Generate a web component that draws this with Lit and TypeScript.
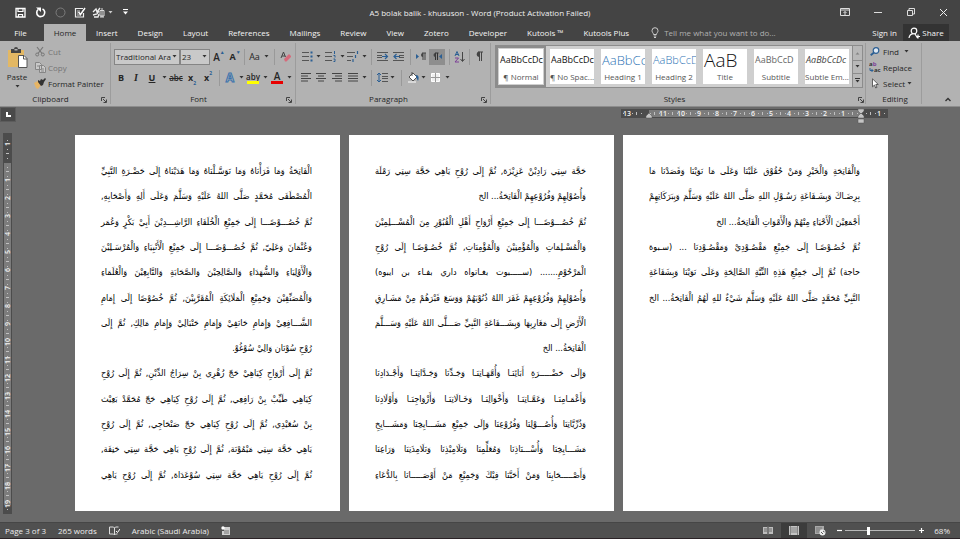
import { LitElement, html, svg, css } from "lit";
import { customElement, property } from "lit/decorators.js";
import { classMap } from "lit/directives/class-map.js";

const shared = css`
  * { box-sizing: border-box; }
  button, select, input {
    font: inherit; color: inherit; background: none; border: 0; margin: 0; padding: 0;
    border-radius: 0; outline: 0; white-space: nowrap;
  }
  button { display: inline-flex; align-items: center; justify-content: center; }
  svg { display: block; flex: none; }
`;

const icon = (w: number, h: number, body: unknown) =>
  html`<svg width=${w} height=${h} viewBox="0 0 ${w} ${h}" fill="none" aria-hidden="true">${body}</svg>`;
const p = (d: string, stroke = "#444", width = 1) => svg`<path d=${d} stroke=${stroke} stroke-width=${width} />`;
const f = (d: string, fill = "#444") => svg`<path d=${d} fill=${fill} />`;
const caret = icon(5, 3, f("M0.5 0h4L2.5 2.5z", "#333"));

const BLUE = "#2b5f94";

const icons = {
  save: icon(11, 11, svg`${p("M1 1.5h9v8.500h-9z", "#fff", 1.3)}${p("M3 1.500v3h5v-3M3.500 10V7.500h4V10", "#fff", 1.200)}`),
  undo: icon(11, 11, svg`${p("M3.200 2.500A4 4 0 1 0 7.500 2", "#fff", 1.600)}${f("M1 .5h5v4.500z", "#fff")}`),
  circle: icon(11, 11, svg`<circle cx="5.500" cy="5.500" r="4.500" stroke="#7c7c7c" />`),
  form: icon(12, 11, svg`${p("M9 1.500H1.500v8.500h8V6", "#eee", 1.200)}${p("M3 4h3M3 6h1M3 8h4", "#ccc")}${p("M4.500 5l2 2.500L11 1", "#fff", 1.500)}`),
  translate: icon(13, 11, svg`${p("M1 5l3-3 1 3 3-4M1 8l4-1 2-3M2 10h4l1-3", "#eee", 1.300)}${p("M8 3.500h4v5.500H8zM10 1v9M8 10h4", "#ddd")}`),
  customize: icon(7, 6, svg`${p("M1 .5h5", "#fff")}${f("M1 2.500h5L3.500 5.500z", "#fff")}`),
  display: icon(10, 8, svg`${p("M.5.5h9v7h-9zM.5 2h9", "#ddd")}${p("M5 7V3.500M3.500 5L5 3.500 6.500 5", "#ddd")}`),
  minimize: icon(8, 8, p("M0 4.500h8", "#ddd")),
  restore: icon(8, 8, p("M.5 2.500h5v5h-5zM2 2V.5h5.500V6H6", "#ddd")),
  close: icon(9, 9, p("M1 1l7 7M8 1L1 8", "#eee")),
  bulb: icon(8, 11, svg`${p("M2.500 7.500C2.500 6 1 5.500 1 3.700a3 3 0 0 1 6 0C7 5.500 5.500 6 5.500 7.500zM2.700 9h2.600M3 10.500h2", "#ccc")}`),
  person: icon(12, 12, svg`<circle cx="6" cy="4" r="2.800" stroke="#fff" stroke-width="1.200" />${p("M1 11c.5-3 2-4 4-4.300M7 7l2.500 4M8 9.500h4M10 7.500v4", "#fff", 1.200)}`),
  paste: icon(21, 22, svg`${f("M1 3h16v17H1z", "#e3b864")}${f("M4 2h3a2 2 0 0 1 4 0h3v4H4z", "#444")}${f("M7.500 2h3v1.500h-3z", "#b2b2b2")}<path d="M11.500 8.500h5.500l3 3v9h-8.500z" fill="#fff" stroke="#555" />${p("M16.500 8.500v3.500H20", "#555")}`),
  cut: icon(10, 11, svg`${p("M2 1l5 6.500M8 1L3 7.500", "#777", 1.200)}<circle cx="2.200" cy="8.500" r="1.500" stroke="#777" /><circle cx="7.800" cy="8.500" r="1.500" stroke="#777" />`),
  copy: icon(11, 11, svg`<path d="M.5.500h4l2 2v5h-6zM4.500 3.500h4l2 2v5h-6z" fill="#c9c9c9" stroke="#858585" />${p("M6 7h3M6 9h3M2 4h2", "#858585")}`),
  painter: icon(12, 12, svg`${f("M0 6l4-2 3 4-3 4-2-1z", "#e6b566")}${f("M4 3l2 1 1-2 2 1 2-2 1 1-2 3-1 3-2 1-3-4z", "#333")}`),
  erase: icon(11, 11, svg`${p("M1 7L3.500 1l2 5M2 5h3", "#444")}${f("M4 8l5-5 2.500 2.500-5 5H5z", "#d66a7b")}`),
  bullets: icon(11, 11, svg`${p("M0 1.500h7M0 5.500h7M0 9.500h7", "#555")}${f("M8.500.500h2v2h-2zM8.500 4.500h2v2h-2zM8.500 8.500h2v2h-2z", BLUE)}`),
  numbering: icon(11, 11, svg`${p("M0 1.500h7M0 5.500h7M0 9.500h7", "#555")}${p("M9.500 0v3M8.500 4.500h1.500v2M8.500 8h1.500v2.500h-1.500", BLUE)}`),
  multilevel: icon(12, 11, svg`${p("M0 1.500h8M0 5.500h6M0 9.500h4", "#555")}${p("M10.500 0v3M8.500 4v3M6 8v3", BLUE, 1.200)}`),
  indentOut: icon(12, 9, svg`${p("M0 .5h11M0 3.500h5M0 5.500h5M0 8.500h11", "#555")}${p("M5 4.500h5M8 2l2.500 2.500L8 7", BLUE, 1.200)}`),
  indentIn: icon(12, 9, svg`${p("M0 .5h11M6 3.500h5M6 5.500h5M0 8.500h11", "#555")}${p("M1 4.500h6M3.500 2L1 4.500 3.500 7", BLUE, 1.200)}`),
  ltr: icon(10, 9, svg`${p("M7 1v7M9 1v7M6 1h4", "#444")}${f("M7 1a2 2 0 0 0 0 4z")}${f("M0 2v5l3-2.500z", BLUE)}`),
  rtl: icon(10, 9, svg`${p("M3.500 1v7M5.500 1v7M3 1h3.500", "#333")}${f("M3.500 1a2 2 0 0 0 0 4z")}${f("M10 2v5L7 4.500z", BLUE)}`),
  sort: icon(11, 12, svg`${p("M1 5L3 .5 5 5M1.500 3.500h3", BLUE)}${p("M1 7h3.500L1 11h4", "#7d3f98")}${p("M8.500 1v9M6.500 8l2 2.500 2-2.500", "#444")}`),
  pilcrow: icon(8, 11, svg`${p("M4.500 1v9M6.500 1v9M3 1h5", "#444")}${f("M4.500.500a2.500 2.500 0 0 0 0 5.500z")}`),
  alignLeft: icon(10, 9, p("M0 .5h10M0 3h7M0 5.500h10M0 8h7", "#444")),
  alignCenter: icon(10, 9, p("M0 .5h10M2 3h6M0 5.500h10M2 8h6", "#444")),
  alignRight: icon(10, 9, p("M0 .5h10M3 3h7M0 5.500h10M3 8h7", "#444")),
  justify: icon(10, 9, p("M0 .5h10M0 3h10M0 5.500h10M0 8h10", "#444")),
  spacing: icon(11, 11, svg`${p("M5 1.500h6M5 4.500h6M5 6.500h6M5 9.500h6", "#555")}${p("M2 1v9M0 3l2-2 2 2M0 8l2 2 2-2", BLUE)}`),
  shading: icon(11, 11, svg`<path d="M1 5l4-4 4 4-4 4z" fill="#fff" stroke="#555" />${p("M4 0v4", "#555")}${f("M8 3c3 0 3 3 2 6L8 5z", BLUE)}${f("M0 9h8v2H0z", "#d8d8d8")}`),
  borders: icon(9, 9, svg`<path d="M.5.500h8v8h-8z" fill="#eee" stroke="#fff" />${p("M4.500 0v9M0 4.500h9", "#999")}`),
  find: icon(10, 9, svg`<circle cx="6" cy="3.500" r="2.800" fill="#dfe9f3" stroke="#2b5f94" stroke-width="1.200" />${p("M4 5.500L.7 8.300", BLUE, 1.800)}`),
  replace: icon(12, 12, svg`<text x="0" y="5" class="tiny">a<tspan class="violet">b</tspan></text><text x="5" y="11" class="tiny">ac</text>${p("M1 7v2.500h3M2.500 8L4 9.500 2.500 11", BLUE)}`),
  pointer: icon(8, 11, svg`<path d="M1.500.800v8l2-1.800 1.200 3 1.300-.6L4.800 6.500h2.500z" fill="#fff" stroke="#444" stroke-width=".8" />`),
  launcher: icon(6, 6, svg`${p("M.5 4V.5H4", "#444")}${p("M2 2l3 3M5.500 2.500v3h-3", "#444")}`),
  book: icon(11, 10, svg`${p("M.5 1h4l1 1v7l-1-1h-4zM5.500 2l1-1h3M5.500 9l1-1h2", "#ddd")}${p("M7 5l1.500 1.500L11 3", "#fff")}`),
  macro: icon(9, 9, svg`${f("M3 1h6v8H1V5h2z", "#cfcfcf")}<circle cx="2" cy="2" r="1.700" fill="#fff" />${p("M3 5h5M3 7h5", "#777")}`),
  read: icon(10, 9, svg`${f("M0 1h4.500v7H0zM5.500 1H10v7H5.500z", "#bdbdbd")}${p("M5 0v9M1 3h3M1 5h3M6 3h3M6 5h3", "#6b6b6b")}`),
  print: icon(10, 9, svg`${f("M0 0h10v9H0z", "#c4c4c4")}${p("M2 2h6M2 4h6M2 6h6M1.500 0v9M8.500 0v9", "#858585")}`),
  web: icon(11, 10, svg`${f("M0 0h9v8H0z", "#a8a8a8")}${p("M1 2h6M1 4h4M1 6h4", "#777")}<circle cx="7.500" cy="6.500" r="3" fill="#eee" />${p("M6 6l2 2M8 5l1.500 1", "#555")}`),
};

const TABS = ["Insert", "Design", "Layout", "References", "Mailings", "Review", "View", "Zotero", "Developer", "Kutools ™", "Kutools Plus"];

interface Line { text: string; end?: boolean }
const L = (text: string): Line => ({ text });
const E = (text: string): Line => ({ text, end: true });

const PAGES: Line[][] = [
  [
    L("الْفَاتِحَةُ وَمَا قَرَأْنَاهُ وَمَا تَوَسَّـلْنَاهُ وَمَا هَدَيْنَاهُ إِلَى حَضْـرَةِ النَّبِيِّ"),
    L("الْمُصْطَفَى مُحَمَّدٍ صَلَّى اللهُ عَلَيْهِ وَسَلَّمَ وَعَلَى أَلِهِ وَأَصْحَابِهِ,"),
    L("ثُمَّ خُصُـــوْصًـــا إِلَى جَمِيْعِ الْخُلَفَاءِ الرَّاشِـــدِيْنَ أَبِيْ بَكْرٍ وَعُمَر"),
    L("وَعُثْمَانَ وَعَلِيّ, ثُمَّ خُصُـــوْصًـــا إِلَى جَمِيْعِ الْأَنْبِيَاءِ وَالْمُرْسَـلِيْنَ"),
    L("وَالْأَوْلِيَاءِ وَالشُّهَدَاءِ وَالصَّالِحِيْنَ وَالصَّحَابَةِ وَالتَّابِعِيْنَ وَالْعُلَمَاءِ"),
    L("وَالْمُصَنِّفِيْنَ وَجَمِيْعِ الْمَلَائِكَةِ الْمُقَرَّبِيْنَ, ثُمَّ خُصُوْصًا إِلَى إِمَامِ"),
    L("الشَّـــافِعِيْ وَإِمَامِ حَانَفِيْ وَإِمَامِ حَنْبَالِيْ وَإِمَامِ مَالِكِ, ثُمَّ إِلَى"),
    E("رُوْحِ سُوْنَان وَالِيْ سُوْغُوْ."),
    L("ثُمَّ إِلَى أَرْوَاحِ كِيَاهِيْ حَجّ زُهْرِي بِنْ سِرَاجُ الدِّيْنِ, ثُمَّ إِلَى رُوْحِ"),
    L("كِيَاهِي طَيِّبْ بِنْ رَافِعِي, ثُمَّ إِلَى رُوْحِ كِيَاهِي حَجّ مُحَمَّدْ بَعِيْث"),
    L("بِنْ سُعَيْدِي, ثُمَّ إِلَى رُوْحِ كِيَاهِي حَجّ صَنْحَاجِي, ثُمَّ إِلَى رُوْحِ"),
    L("يَاهِي حَجَّة سِتِي مَيْمُوْنَة, ثُمَّ إِلَى رُوْحِ يَاهِي حَجَّة سِتِي حَنِفَة,"),
    L("ثُمَّ إِلَى رُوْحِ يَاهِي حَجَّة سِتِي سُوْعَدَاة, ثُمَّ إِلَى رُوْحِ يَاهِي"),
  ],
  [
    L("حَجَّة سِتِي رَادِيْنْ عَزِيْزَة, ثُمَّ إِلَى رُوْحِ يَاهِي حَجَّة سِتِي رَمْلَة"),
    E("وَأُصُوْلِهِمْ وَفُرُوْعِهِمْ الْفَاتِحَةُ... الخ"),
    L("ثُمَّ خُصُـــوْصًـــا إِلَى جَمِيْعِ أَرْوَاحِ أَهْلِ الْقُبُوْرِ مِنَ الْمُسْـــلِمِيْنَ"),
    L("وَالْمُسْـلِمَاتِ وَالْمُؤْمِنِيْنَ وَالْمُؤْمِنَاتِ, ثُمَّ خُصُـوْصًـا إِلَى رُوْحِ"),
    L("الْمَرْحُوْمِ....... (ســـــبوت بغـاتواه داري بفـاء بن ايبوه)"),
    L("وَأُصُوْلِهِمْ وَفُرُوْعِهِمْ غَفَرَ اللهُ ذُنُوْبَهُمْ وَوَسَعَ قَبْرَهُمْ مِنْ مَشَـارِقِ"),
    L("الْأَرْضِ إِلَى مَغَارِبِهَا وَبِشَـــفَاعَةِ النَّبِيِّ صَـــلَّى اللهُ عَلَيْهِ وَسَـــلَّمَ"),
    E("الْفَاتِحَةُ... الخ"),
    L("وَإِلَى حَضْـــــرَةِ أَبَائِنَـا وَأُمَّهَـاتِنَـا وَجَـدِّنَا وَجَـدَّاتِنَـا وَأَجْـدَادِنَا"),
    L("وَأَعْمَـامِنَـا وَعَمَّـاتِنَـا وَأَخْوَالِنَـا وَخَـالَاتِنَـا وَأَزْوَاجِنَـا وَأَوْلَادِنَا"),
    L("وَذُرِّيَّاتِنَا وَأُصُـــوْلِنَا وَفُرُوْعِنَا وَإِلَى جَمِيْعِ مَشَـــايِخِنَا وَمَشَـــايِخِ"),
    L("مَشَـــايِخِنَا وَأُسْـــتَاذِنَا وَمُعَلِّمِنَا وَتَلَامِيْذِنَا وَتَلَامِذَتِنَا وَرَاعِنَا"),
    L("وَأَصْـــــحَابِنَا وَمَنْ أَحَبَّنَا فِيْكَ وَجَمِيْعِ مَنْ أَوْصَـــــانَا بِالدُّعَاءِ"),
  ],
  [
    L("وَالْفَاتِحَةِ وَالْخَيْرِ وَمَنْ حُقُوْق عَلَيْنَا وَعَلَى مَا نَوَيْنَا وَقَصَدْنَا مَا"),
    L("بِرِضَـاكَ وَبِشَـفَاعَةِ رَسُـوْلِ اللهِ صَلَّى اللهُ عَلَيْهِ وَسَلَّمَ وَبِبَرَكَاتِهِمْ"),
    E("أَجْمَعِيْنَ الْأَحْيَاءِ مِنْهُمْ وَالْأَمْوَاتِ الْفَاتِحَةُ... الخ"),
    L("ثُمَّ خُصُـوْصًـا إِلَى جَمِيْعِ مَقْصُـوْدِيْ وَمَقْصُـوْدِنَا ... (سـبوة"),
    L("حاجة) ثُمَّ إِلَى جَمِيْعِ هَذِهِ النِّيَّةِ الصَّالِحَةِ وَعَلَى نَوَيْنَا وَبِشَفَاعَةِ"),
    L("النَّبِيِّ مُحَمَّدٍ صَلَّى اللهُ عَلَيْهِ وَسَلَّمَ شَيْءٌ للهِ لَهُمُ الْفَاتِحَةُ... الخ"),
  ],
];

@customElement("word-titlebar")
class WordTitlebar extends LitElement {
  static styles = [shared, css`
    :host { display: grid; grid-template-columns: 1fr auto 1fr; align-items: center; height: 24px; color: #f0f0f0; }
    .quick { display: flex; align-items: center; padding-left: 10px; }
    .quick button { width: 20px; height: 22px; }
    .quick .drop { width: 25px; gap: 3px; }
    .light { filter: invert(1); }
    .title { font-size: 8px; }
    .window { display: flex; justify-content: flex-end; }
    .window button { width: 33px; height: 22px; }
  `];
  render() {
    return html`
      <div class="quick">
        <button aria-label="Save">${icons.save}</button>
        <button aria-label="Undo">${icons.undo}</button>
        <button aria-label="Repeat">${icons.circle}</button>
        <button aria-label="Form">${icons.form}</button>
        <button class="drop" aria-label="Translate">${icons.translate}<span class="light">${caret}</span></button>
        <button aria-label="Customize Quick Access Toolbar">${icons.customize}</button>
      </div>
      <div class="title">A5 bolak balik - khususon - Word (Product Activation Failed)</div>
      <div class="window">
        <button aria-label="Ribbon Display Options">${icons.display}</button>
        <button aria-label="Minimize">${icons.minimize}</button>
        <button aria-label="Restore">${icons.restore}</button>
        <button aria-label="Close">${icons.close}</button>
      </div>`;
  }
}

@customElement("word-tabs")
class WordTabs extends LitElement {
  static styles = [shared, css`
    :host { display: flex; height: 17px; color: #f4f4f4; font-size: 8px; }
    button { padding: 0 10px; height: 17px; }
    .file { width: 41px; margin-right: 3px; }
    .home { width: 42px; background: #b2b2b2; color: #262626; }
    .tell { display: flex; align-items: center; gap: 5px; padding-left: 12px; flex: 1; }
    .tell input { width: 140px; }
    .tell input::placeholder { color: #b0b0b0; opacity: 1; }
    .sign { padding: 0 6px; }
    .share { background: #333; width: 46px; padding: 0; gap: 2px; margin-right: 11px; }
  `];
  render() {
    return html`
      <button class="file">File</button>
      <button class="home">Home</button>
      ${TABS.map((t) => html`<button>${t}</button>`)}
      <label class="tell">${icons.bulb}<input placeholder="Tell me what you want to do..." aria-label="Tell me what you want to do" /></label>
      <button class="sign">Sign in</button>
      <button class="share">${icons.person}Share</button>`;
  }
}

@customElement("word-ribbon")
class WordRibbon extends LitElement {
  static styles = [shared, css`
    :host { display: flex; height: 66px; background: #b2b2b2; color: #262626; font-size: 8px; border-bottom: 1px solid #8d8d8d; }
    .group { display: grid; grid-template-rows: 1fr 12px; border-right: 1px solid #9c9c9c; margin: 2px 0; padding-left: 3px; flex: none; }
    .clipboard { width: 111px; }
    .font { width: 185px; }
    .paragraph { width: 195px; }
    .styles { width: 375px; }
    .editing { width: 56px; }
    .foot { display: grid; grid-template-columns: 1fr 12px; align-items: end; text-align: center; line-height: 11px; }
    .foot.plain { grid-template-columns: 1fr; }
    .foot button { height: 9px; }
    .row { display: flex; align-items: center; height: 21px; }
    .rows { padding-top: 3px; }
    .row button { height: 16px; }
    .w6 { width: 6px; } .w8 { width: 8px; } .w12 { width: 12px; } .w14 { width: 14px; }
    .w16 { width: 16px; } .w18 { width: 18px; } .w26 { width: 26px; gap: 4px; font-size: 9px; }
    .sep { flex: none; height: 16px; display: flex; justify-content: center; }
    .sep::before { content: ""; width: 1px; background: #999; }
    .s4 { width: 4px; } .s6 { width: 6px; } .s8 { width: 8px; } .s10 { width: 10px; } .s12 { width: 12px; }
    .on { background: #8e8e8e; }
    .combo { position: relative; display: flex; align-items: center; height: 16px; background: #c9c9c9; border: 1px solid #858585; }
    .combo select { appearance: none; width: 100%; height: 14px; padding-left: 1px; }
    .combo svg { position: absolute; right: 2px; }
    .face { width: 66px; } .size { width: 30px; }
    .paste-area { display: flex; gap: 3px; }
    .paste { flex-direction: column; width: 28px; gap: 3px; line-height: 10px; }
    .stack { display: flex; flex-direction: column; align-items: flex-start; }
    .stack button { height: 16px; gap: 2px; }
    .stack .i { width: 12px; display: flex; justify-content: center; }
    .dim { color: #747474; }
    .bold { font-weight: 700; font-size: 9px; }
    .italic { font-style: italic; font-family: "Liberation Serif", serif; font-weight: 700; font-size: 10px; }
    .under { font-weight: 700; text-decoration: underline; font-size: 9px; }
    .strike { text-decoration: line-through; font-weight: 600; }
    .big { font-size: 10px; font-weight: 600; }
    small { font-size: 5px; color: #2b5f94; align-self: flex-start; }
    .low small { align-self: flex-end; }
    .outline { color: #b2b2b2; font-size: 12px; font-weight: 700; -webkit-text-stroke: 1px #3a72ad; }
    .mark, .ink { flex-direction: column; line-height: 9px; font-weight: 600; }
    .mark::after, .ink::after { content: ""; width: 12px; height: 3px; background: #ff0; }
    .ink { font-size: 10px; }
    .ink::after { background: #e80000; }
    .gallery { display: flex; height: 43px; margin: 2px 4px 0 1px; border: 1px solid #8c8c8c; background: #cfcfcf; }
    .cards { display: flex; gap: 1px; flex: 1; }
    .card { flex-direction: column; justify-content: flex-end; width: 50px; height: 41px; padding: 3px; }
    .card.sel { border: 2px solid #8c8c8c; padding: 1px; }
    .sample { display: flex; align-items: center; width: 44px; height: 21px; overflow: hidden; background: #fff; padding-left: 1px; font-size: 9px; color: #111; }
    .name { width: 44px; height: 14px; line-height: 14px; background: #fff; color: #555; }
    .h1 { font-size: 13px; font-weight: 300; color: #2e74b5; }
    .h2 { font-size: 11px; font-weight: 300; color: #2e74b5; }
    .title { font-size: 19px; font-weight: 300; line-height: 20px; }
    .subtitle { color: #666; }
    .subtle { font-style: italic; color: #444; }
    .scroll { display: grid; grid-template-rows: 1fr 1fr 1fr; width: 10px; border-left: 1px solid #8c8c8c; background: #b8b8b8; }
    .scroll button + button { border-top: 1px solid #8c8c8c; }
    .faint { opacity: .4; transform: rotate(180deg); }
    .more { flex-direction: column; gap: 1px; }
    .more::before { content: ""; width: 5px; height: 1px; background: #333; }
    .collapse { margin-left: auto; align-self: flex-end; width: 24px; height: 14px; }
    .tiny { font-size: 6px; font-weight: 700; fill: #333; }
    .violet { fill: #7d3f98; }
  `];
  foot(label: string, launcher = true) {
    return html`<div class=${classMap({ foot: true, plain: !launcher })}><span>${label}</span>${launcher ? html`<button aria-label="${label} settings">${icons.launcher}</button>` : ""}</div>`;
  }
  b(cls: string, label: string, body: unknown) {
    return html`<button class=${cls} aria-label=${label}>${body}</button>`;
  }
  card(sample: string, name: string, cls = "", selected = false) {
    return html`<button class=${classMap({ card: true, sel: selected })}><span class="sample ${cls}">${sample}</span><span class="name">${name}</span></button>`;
  }
  render() {
    const c = (cls: string) => this.b(cls, "More options", caret);
    return html`
      <section class="group clipboard">
        <div class="paste-area">
          <button class="paste">${icons.paste}<span>Paste</span>${caret}</button>
          <div class="stack">
            <button class="dim"><span class="i">${icons.cut}</span>Cut</button>
            <button class="dim"><span class="i">${icons.copy}</span>Copy</button>
            <button><span class="i">${icons.painter}</span>Format Painter</button>
          </div>
        </div>
        ${this.foot("Clipboard")}
      </section>
      <section class="group font">
        <div class="rows">
          <div class="row">
            <label class="combo face"><select aria-label="Font"><option>Traditional Ara</option></select>${caret}</label>
            <label class="combo size"><select aria-label="Font size"><option>23</option></select>${caret}</label>
            ${this.b("w18 big", "Increase font size", html`A<small>▲</small>`)}
            ${this.b("w14 bold", "Decrease font size", html`A<small>▼</small>`)}
            <span class="sep s4"></span>
            ${this.b("w26", "Change case", html`Aa${caret}`)}
            <span class="sep s4"></span>
            ${this.b("w18", "Clear formatting", icons.erase)}
          </div>
          <div class="row">
            ${this.b("w14 bold", "Bold", "B")}${this.b("w16 italic", "Italic", "I")}${this.b("w16 under", "Underline", "U")}${c("w8")}
            ${this.b("w16 strike", "Strikethrough", "abc")}${this.b("w16 bold low", "Subscript", html`x<small>2</small>`)}${this.b("w16 bold", "Superscript", html`x<small>2</small>`)}
            <span class="sep s6"></span>
            ${this.b("w16 outline", "Text effects", "A")}${c("w6")}${this.b("w18 mark", "Highlight", "aby")}${c("w6")}${this.b("w18 ink", "Font color", "A")}${c("w6")}
          </div>
        </div>
        ${this.foot("Font")}
      </section>
      <section class="group paragraph">
        <div class="rows">
          <div class="row">
            ${this.b("w16", "Bullets", icons.bullets)}${c("w6")}${this.b("w18", "Numbering", icons.numbering)}${c("w6")}${this.b("w16", "Multilevel list", icons.multilevel)}${c("w6")}
            <span class="sep s8"></span>
            ${this.b("w16", "Decrease indent", icons.indentOut)}${this.b("w16", "Increase indent", icons.indentIn)}
            <span class="sep s6"></span>
            ${this.b("w16", "Left to right", icons.ltr)}${this.b("w16 on", "Right to left", icons.rtl)}
            <span class="sep s8"></span>
            ${this.b("w12", "Sort", icons.sort)}
            <span class="sep s8"></span>
            ${this.b("w12", "Show marks", icons.pilcrow)}
          </div>
          <div class="row">
            ${this.b("w14", "Align left", icons.alignLeft)}${this.b("w16", "Center", icons.alignCenter)}${this.b("w16", "Align right", icons.alignRight)}${this.b("w16", "Justify", icons.justify)}${c("w6")}
            <span class="sep s8"></span>
            ${this.b("w14", "Line spacing", icons.spacing)}${c("w6")}
            <span class="sep s12"></span>
            ${this.b("w12", "Shading", icons.shading)}${c("w8")}${this.b("w16", "Borders", icons.borders)}${c("w8")}
          </div>
        </div>
        ${this.foot("Paragraph")}
      </section>
      <section class="group styles">
        <div class="gallery">
          <div class="cards">
            ${this.card("AaBbCcDc", "¶ Normal", "", true)}
            ${this.card("AaBbCcDc", "¶ No Spac...")}
            ${this.card("AaBbCc", "Heading 1", "h1")}
            ${this.card("AaBbCcD", "Heading 2", "h2")}
            ${this.card("AaB", "Title", "title")}
            ${this.card("AaBbCcD", "Subtitle", "subtitle")}
            ${this.card("AaBbCcDc", "Subtle Em...", "subtle")}
          </div>
          <div class="scroll">
            <button class="faint" aria-label="Previous row">${caret}</button>
            <button aria-label="Next row">${caret}</button>
            <button class="more" aria-label="More styles">${caret}</button>
          </div>
        </div>
        ${this.foot("Styles")}
      </section>
      <section class="group editing">
        <div class="paste-area">
          <div class="stack">
            <button><span class="i">${icons.find}</span>Find <span class="i">${caret}</span></button>
            <button><span class="i">${icons.replace}</span>Replace</button>
            <button><span class="i">${icons.pointer}</span>Select ${caret}</button>
          </div>
        </div>
        ${this.foot("Editing", false)}
      </section>
      <button class="collapse" aria-label="Collapse ribbon">${icon(6, 5, p("M.5 4L3 1.500 5.500 4", "#333", 1.400))}</button>`;
  }
}

@customElement("word-ruler")
class WordRuler extends LitElement {
  @property({ type: Boolean }) vertical = false;
  static styles = css`
    :host { display: block; }
    svg { display: block; }
    .num { font: 600 7px "Open Sans", sans-serif; fill: #f4f4f4; text-anchor: middle; }
  `;
  ticks(zero: number, from: number, to: number, skip: number[] = []) {
    const out = [];
    for (let q = from; q <= to; q++) {
      const at = zero + Math.round((q * 18) / 4);
      if (q === 0) continue;
      const n = Math.abs(q / 4);
      if (q % 4 === 0) {
        if (skip.includes(q / 4)) continue;
        out.push(this.vertical
          ? svg`<text class="num" transform="translate(7 ${at}) rotate(-90)">${n}</text>`
          : svg`<text class="num" x=${at} y="7">${n}</text>`);
      } else {
        const len = q % 2 === 0 ? 3 : 1;
        out.push(this.vertical
          ? svg`<rect x=${q % 2 === 0 ? 3 : 4} y=${at} width=${len} height="1" fill="#c0c0c0" />`
          : svg`<rect x=${at} y=${q % 2 === 0 ? 3 : 4} width="1" height=${len} fill="#c0c0c0" />`);
      }
    }
    return out;
  }
  render() {
    if (this.vertical) {
      return html`<svg width="9" height="381" aria-hidden="true">
        <rect width="9" height="381" fill="#4c4c4c" /><rect x="1" y="30" width="7" height="342" fill="#7c7c7c" />
        ${this.ticks(29, -5, 77)}</svg>`;
    }
    return html`<svg width="267" height="15" aria-hidden="true">
      <rect width="267" height="9" fill="#4c4c4c" /><rect x="28" y="1" width="212" height="7" fill="#7c7c7c" />
      <g>${this.ticks(240, -53, 5, [-12])}</g>
      <path d="M25 9V7l3-3 3 3v2zM237 0h6v2l-3 3-3-3zM237 9V7l3-3 3 3v2zM237 10h6v4h-6z" fill="#c4c4c4" stroke="#555" stroke-width=".5" /></svg>`;
  }
}

@customElement("word-workspace")
class WordWorkspace extends LitElement {
  static styles = [shared, css`
    :host { flex: 1; display: grid; grid-template-columns: 12px 1fr; grid-template-rows: 26px 1fr; background: #6a6a6a; padding-right: 9px; min-height: 0; }
    .corner { width: 16px; height: 15px; background: #4a4a4a; border: 1px solid #5c5c5c; }
    .top { display: flex; justify-content: center; padding-top: 2px; }
    .track { flex: 0 1 813px; display: flex; justify-content: flex-end; }
    .side { padding-left: 3px; }
    .pages { display: flex; justify-content: center; gap: 9px; padding: 2px 0 11px; }
    .page {
      flex: 0 1 265px; background: #fff; direction: rtl; padding: 24px 28px 23px 26px;
      display: grid; grid-template-columns: minmax(0, 1fr); grid-template-rows: repeat(13, 1fr);
      font: 9px "DejaVu Sans Condensed", "DejaVu Sans", sans-serif; color: #000;
    }
    .line { margin: 0; white-space: nowrap; text-align: justify; text-align-last: justify; line-height: 25px; min-width: 0; }
    .end { text-align-last: right; }
  `];
  render() {
    return html`
      <button class="corner" aria-label="Tab selector">${icon(5, 5, p("M1 0v4h4", "#fff", 2))}</button>
      <div class="top"><div class="track"><word-ruler></word-ruler></div></div>
      <div class="side"><word-ruler vertical></word-ruler></div>
      <main class="pages">
        ${PAGES.map((page) => html`<article class="page" lang="ar">
          ${page.map((l) => html`<p class=${classMap({ line: true, end: !!l.end })}>${l.text}</p>`)}
        </article>`)}
      </main>`;
  }
}

@customElement("word-status")
class WordStatus extends LitElement {
  static styles = [shared, css`
    :host { box-sizing: border-box; display: flex; align-items: center; height: 17px; background: #505050; color: #ececec; font-size: 8px; border-top: 1px solid #464646; border-bottom: 1px solid #2a2226; padding: 0 10px 0 5px; }
    button { height: 15px; }
    .left { display: flex; gap: 12px; flex: 1; }
    .view { width: 26px; }
    .on { background: #3c3c3c; }
    .zoom { display: flex; align-items: center; margin-left: 3px; gap: 3px; }
    .zoom button { width: 6px; }
    input { appearance: none; width: 70px; height: 9px; background: linear-gradient(#b8b8b8, #b8b8b8) center / 100% 1px no-repeat; }
    input::-webkit-slider-thumb { appearance: none; width: 3px; height: 8px; background: #fff; }
    .pct { width: 26px; justify-content: flex-end; }
  `];
  render() {
    return html`
      <div class="left">
        <button>Page 3 of 3</button><button>265 words</button><button aria-label="Proofing">${icons.book}</button>
        <button>Arabic (Saudi Arabia)</button><button aria-label="Macros">${icons.macro}</button>
      </div>
      <button class="view" aria-label="Read mode">${icons.read}</button>
      <button class="view on" aria-label="Print layout">${icons.print}</button>
      <button class="view" aria-label="Web layout">${icons.web}</button>
      <div class="zoom">
        <button aria-label="Zoom out">${icon(5, 5, p("M0 2.500h5", "#fff", 1.200))}</button>
        <input type="range" min="10" max="190" value="68" aria-label="Zoom" />
        <button aria-label="Zoom in">${icon(5, 5, p("M0 2.500h5M2.500 0v5", "#fff", 1.200))}</button>
      </div>
      <button class="pct">68%</button>`;
  }
}

@customElement("app-root")
class AppRoot extends LitElement {
  static styles = css`
    :host { display: flex; flex-direction: column; min-height: 100vh; background: #444; font-family: "Open Sans", "Noto Sans", sans-serif; }
    word-ribbon { box-sizing: border-box; }
  `;
  render() {
    return html`<word-titlebar></word-titlebar><word-tabs></word-tabs><word-ribbon></word-ribbon><word-workspace></word-workspace><word-status></word-status>`;
  }
}
